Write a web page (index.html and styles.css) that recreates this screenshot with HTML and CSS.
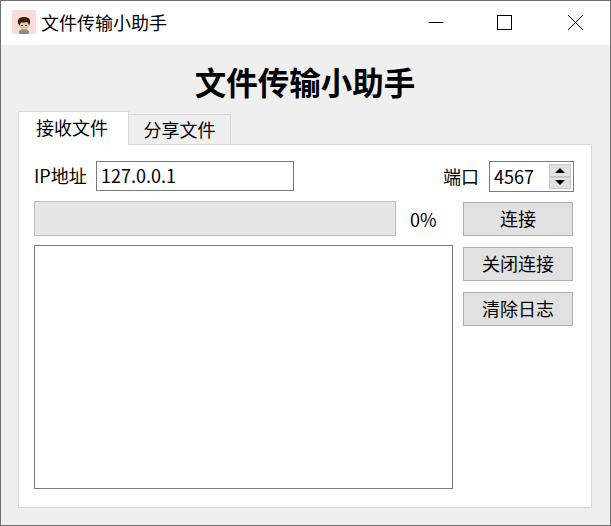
FILE: index.html
```html
<!DOCTYPE html>
<html lang="zh">
<head>
<meta charset="utf-8">
<title>文件传输小助手</title>
<link rel="stylesheet" href="styles.css">
</head>
<body>
<div class="window">
  <header class="titlebar">
    <svg class="app-icon" width="24" height="24" viewBox="0 0 24 24">
      <rect width="24" height="24" fill="#fbdcd8"/>
      <path d="M7 24v-3l3-2h4l3 2v3z" fill="#8d8f78"/>
      <ellipse cx="12" cy="15" rx="4.500" ry="4.500" fill="#e2c4a8"/>
      <path d="M6 13c-1-4 2-6 6-6s7 2 6 6l-1 3c-.500-2-1-3.500-2-4-2 .500-4 .500-6 .500-.800 1-1 2-1.500 3.500z" fill="#3a1f12"/>
      <rect x="9" y="15" width="2" height="1" fill="#444"/>
      <rect x="13" y="15" width="2" height="1" fill="#444"/>
    </svg>
    <span class="app-name">文件传输小助手</span>
    <div class="win-controls">
      <svg class="win-btn win-min" width="46" height="44" viewBox="0 0 46 44"><path d="M15.500 21.500h15" stroke="#000" stroke-width="1"/></svg>
      <svg class="win-btn" width="46" height="44" viewBox="0 0 46 44"><rect x="16.500" y="14.500" width="14" height="14" fill="none" stroke="#000" stroke-width="1"/></svg>
      <svg class="win-btn win-close" width="46" height="44" viewBox="0 0 46 44"><path d="M16 14l15 15M31 14l-15 15" stroke="#000" stroke-width="1" fill="none"/></svg>
    </div>
  </header>
  <main class="content">
    <h1 class="heading">文件传输小助手</h1>
    <div class="tabs">
      <div class="tab tab-active">接收文件</div>
      <div class="tab">分享文件</div>
    </div>
    <section class="pane">
      <div class="row-top">
        <label class="label-ip">IP地址</label>
        <div class="field field-ip">127.0.0.1</div>
        <label class="label-port">端口</label>
        <div class="spin">
          <span class="spin-value">4567</span>
          <div class="spin-btns">
            <span class="spin-btn"><svg width="10" height="5" viewBox="0 0 10 5"><path d="M5 0l5 5H0z" fill="#000"/></svg></span>
            <span class="spin-btn"><svg width="10" height="5" viewBox="0 0 10 5"><path d="M0 0h10L5 5z" fill="#000"/></svg></span>
          </div>
        </div>
      </div>
      <div class="row-main">
        <div class="left">
          <div class="progress-row">
            <div class="progress"></div>
            <span class="percent">0%</span>
          </div>
          <div class="log"></div>
        </div>
        <div class="actions">
          <button class="btn">连接</button>
          <button class="btn">关闭连接</button>
          <button class="btn">清除日志</button>
        </div>
      </div>
    </section>
  </main>
</div>
</body>
</html>
```
FILE: styles.css
```css
* { box-sizing: border-box; }
html, body { margin: 0; padding: 0; }
body {
  width: 611px;
  height: 526px;
  overflow: hidden;
  font-family: "Noto Sans CJK SC", "Liberation Sans", sans-serif;
  font-size: 18px;
  color: #000;
}
.window {
  width: 611px;
  height: 526px;
  border: 1px solid #6f6f6f;
  background: #efefef;
  display: flex;
  flex-direction: column;
}
.titlebar {
  height: 44px;
  background: #fff;
  display: flex;
  align-items: center;
  padding-left: 11px;
  flex: none;
}
.app-icon { flex: none; margin-top: -2px; }
.app-name { margin-left: 5px; line-height: 24px; margin-top: -2px; }
.win-controls { margin-left: auto; display: flex; margin-right: 12px; gap: 25px; }
.win-btn { display: block; }
.win-min { margin-right: -3px; }
.content {
  flex: 1;
  padding: 0 18px 0 17px;
  display: flex;
  flex-direction: column;
}
.heading {
  margin: 0;
  height: 66px;
  font-size: 31.500px;
  line-height: 72px;
  font-weight: 700;
  text-align: center;
}
.tabs {
  display: flex;
  align-items: flex-end;
  position: relative;
  z-index: 1;
  margin-bottom: -1px;
}
.tab {
  width: 102px;
  height: 31px;
  line-height: 29px;
  text-align: center;
  background: #efefef;
  border: 1px solid #d9d9d9;
  border-left: 0;
}
.tab-active {
  width: 111px;
  height: 34px;
  line-height: 30px;
  padding-right: 3px;
  background: #fff;
  border-left: 1px solid #d9d9d9;
  border-bottom: 0;
}
.pane {
  width: 574px;
  height: 364px;
  background: #fff;
  border: 1px solid #d9d9d9;
  padding: 16px 15px 0;
}
.row-top {
  display: flex;
  align-items: flex-start;
  height: 31px;
  line-height: 29px;
}
.label-ip { width: 62px; }
.field-ip {
  width: 198px;
  height: 30px;
  border: 1px solid #7a7a7a;
  padding-left: 4px;
  line-height: 26px;
}
.label-port { margin-left: auto; margin-right: 10px; line-height: 31px; }
.spin {
  width: 85px;
  height: 31px;
  border: 1px solid #7a7a7a;
  display: flex;
  align-items: center;
  justify-content: space-between;
  padding: 1px 2px 1px 4px;
  margin-right: 2px;
}
.spin-btns { display: flex; flex-direction: column; width: 22px; height: 25px; }
.spin-btn {
  flex: 1;
  background: #e1e1e1;
  border: 1px solid #c8c8c8;
  display: flex;
  align-items: center;
  justify-content: center;
}
.row-main {
  display: flex;
  justify-content: space-between;
  margin-top: 9px;
}
.left { width: 419px; }
.progress-row { display: flex; align-items: center; height: 35px; }
.progress {
  width: 362px;
  height: 35px;
  background: #e6e6e6;
  border: 1px solid #bcbcbc;
}
.percent { margin-left: 14px; }
.log {
  width: 419px;
  height: 244px;
  margin-top: 9px;
  background: #fff;
  border: 1px solid #7a7a7a;
}
.actions {
  width: 110px;
  margin-right: 3px;
  padding-top: 1px;
  display: flex;
  flex-direction: column;
  gap: 11px;
}
.btn {
  width: 110px;
  height: 34px;
  padding: 0 0 2px;
  font: inherit;
  color: #000;
  background: #e1e1e1;
  border: 1px solid #adadad;
}
```
